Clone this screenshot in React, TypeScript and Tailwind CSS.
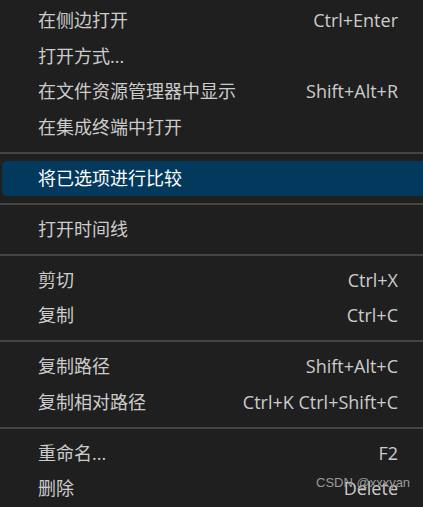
import React from "react";

type Item = { label: string; keys?: string; active?: boolean };

const groups: Item[][] = [
  [
    { label: "在侧边打开", keys: "Ctrl+Enter" },
    { label: "打开方式..." },
    { label: "在文件资源管理器中显示", keys: "Shift+Alt+R" },
    { label: "在集成终端中打开" },
  ],
  [{ label: "将已选项进行比较", active: true }],
  [{ label: "打开时间线" }],
  [
    { label: "剪切", keys: "Ctrl+X" },
    { label: "复制", keys: "Ctrl+C" },
  ],
  [
    { label: "复制路径", keys: "Shift+Alt+C" },
    { label: "复制相对路径", keys: "Ctrl+K Ctrl+Shift+C" },
  ],
  [
    { label: "重命名...", keys: "F2" },
    { label: "删除", keys: "Delete" },
  ],
];

function Row({ item }: { item: Item }) {
  return (
    <div
      className={
        "flex h-[35.5px] items-center justify-between pr-[25px] " +
        (item.active
          ? "ml-[2px] rounded-l-[5px] bg-[#04395e] pl-[36px] text-white"
          : "pl-[38px] text-[#cccccc]")
      }
    >
      <span className="text-[18px]">{item.label}</span>
      {item.keys && <span className="text-[18px]">{item.keys}</span>}
    </div>
  );
}

export default function App() {
  return (
    <div
      className="relative h-[507px] w-[423px] overflow-hidden bg-[#1f1f1f] pt-[3px]"
      style={{ fontFamily: '"Open Sans", "Noto Sans CJK SC", sans-serif' }}
    >
      {groups.map((g, i) => (
        <div key={i}>
          {i > 0 && (
            <div className="flex h-[15.5px] items-center">
              <div className="h-[2px] w-full bg-[#454545]" />
            </div>
          )}
          {g.map((item) => (
            <Row key={item.label} item={item} />
          ))}
        </div>
      ))}
      <div
        className="absolute left-[316px] top-[473px] text-[13px] text-[#9a9a9a]"
        style={{ fontFamily: '"Liberation Sans", sans-serif' }}
      >
        CSDN @xxxyan
      </div>
    </div>
  );
}
